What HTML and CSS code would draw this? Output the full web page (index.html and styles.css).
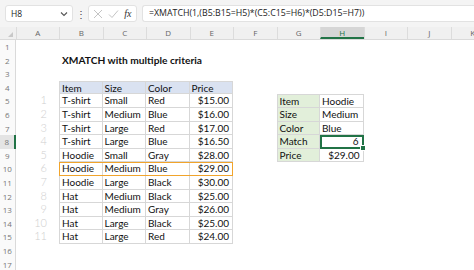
FILE: index.html
```html
<!DOCTYPE html>
<html lang="en">
<head>
    <meta charset="UTF-8">
    <title>XMATCH with multiple criteria</title>
    <link rel="stylesheet" href="styles.css">
</head>
<body>

    <div class="toolbar">
        <div class="namebox">
            <span>H8</span>
            <svg width="8" height="6" viewBox="0 0 8 6"><path d="M1 1.5 L4 4.5 L7 1.5" fill="none" stroke="#555" stroke-width="1.1"/></svg>
        </div>
        <div class="dots">&#8942;</div>
        <div class="fxbox">
            <svg width="10" height="10" viewBox="0 0 10 10"><path d="M1 1 L9 9 M9 1 L1 9" stroke="#c4c4c4" stroke-width="1"/></svg>
            <svg width="11" height="10" viewBox="0 0 11 10"><path d="M1 5.5 L4 8.5 L10 1.5" fill="none" stroke="#c4c4c4" stroke-width="1"/></svg>
            <span class="fx">fx</span>
        </div>
        <div class="formula">=XMATCH(1,(B5:B15=H5)*(C5:C15=H6)*(D5:D15=H7))</div>
    </div>

    <div class="sheet">
        <div class="colhead">
            <div class="corner"><span class="tri"></span></div>
            <div class="col">A</div>
            <div class="col">B</div>
            <div class="col">C</div>
            <div class="col">D</div>
            <div class="col">E</div>
            <div class="col">F</div>
            <div class="col">G</div>
            <div class="col active">H</div>
            <div class="col">I</div>
            <div class="col">J</div>
            <div class="col">K</div>
        </div>

        <div class="row"><div class="rh">1</div></div>
        <div class="row"><div class="rh">2</div><div class="c"></div><div class="title">XMATCH with multiple criteria</div></div>
        <div class="row"><div class="rh">3</div></div>
        <div class="row">
            <div class="rh">4</div><div class="c"></div>
            <div class="trow first head"><div class="c">Item</div><div class="c">Size</div><div class="c">Color</div><div class="c">Price</div></div>
        </div>
        <div class="row">
            <div class="rh">5</div><div class="c num">1</div>
            <div class="trow"><div class="c">T-shirt</div><div class="c">Small</div><div class="c">Red</div><div class="c r">$15.00</div></div>
            <div class="c"></div>
            <div class="lrow first"><div class="c lab">Item</div><div class="c">Hoodie</div></div>
        </div>
        <div class="row">
            <div class="rh">6</div><div class="c num">2</div>
            <div class="trow"><div class="c">T-shirt</div><div class="c">Medium</div><div class="c">Blue</div><div class="c r">$16.00</div></div>
            <div class="c"></div>
            <div class="lrow"><div class="c lab">Size</div><div class="c">Medium</div></div>
        </div>
        <div class="row">
            <div class="rh">7</div><div class="c num">3</div>
            <div class="trow"><div class="c">T-shirt</div><div class="c">Large</div><div class="c">Red</div><div class="c r">$17.00</div></div>
            <div class="c"></div>
            <div class="lrow"><div class="c lab">Color</div><div class="c">Blue</div></div>
        </div>
        <div class="row">
            <div class="rh sel">8</div><div class="c num">4</div>
            <div class="trow"><div class="c">T-shirt</div><div class="c">Large</div><div class="c">Blue</div><div class="c r">$16.50</div></div>
            <div class="c"></div>
            <div class="lrow"><div class="c lab">Match</div><div class="c r picked">6<span class="handle"></span></div></div>
        </div>
        <div class="row">
            <div class="rh">9</div><div class="c num">5</div>
            <div class="trow"><div class="c">Hoodie</div><div class="c">Small</div><div class="c">Gray</div><div class="c r">$28.00</div></div>
            <div class="c"></div>
            <div class="lrow"><div class="c lab">Price</div><div class="c r">$29.00</div></div>
        </div>
        <div class="row">
            <div class="rh">10</div><div class="c num">6</div>
            <div class="trow found"><div class="c">Hoodie</div><div class="c">Medium</div><div class="c">Blue</div><div class="c r">$29.00</div></div>
        </div>
        <div class="row">
            <div class="rh">11</div><div class="c num">7</div>
            <div class="trow"><div class="c">Hoodie</div><div class="c">Large</div><div class="c">Black</div><div class="c r">$30.00</div></div>
        </div>
        <div class="row">
            <div class="rh">12</div><div class="c num">8</div>
            <div class="trow"><div class="c">Hat</div><div class="c">Medium</div><div class="c">Black</div><div class="c r">$25.00</div></div>
        </div>
        <div class="row">
            <div class="rh">13</div><div class="c num">9</div>
            <div class="trow"><div class="c">Hat</div><div class="c">Medium</div><div class="c">Gray</div><div class="c r">$26.00</div></div>
        </div>
        <div class="row">
            <div class="rh">14</div><div class="c num">10</div>
            <div class="trow"><div class="c">Hat</div><div class="c">Large</div><div class="c">Black</div><div class="c r">$25.00</div></div>
        </div>
        <div class="row">
            <div class="rh">15</div><div class="c num">11</div>
            <div class="trow"><div class="c">Hat</div><div class="c">Large</div><div class="c">Red</div><div class="c r">$24.00</div></div>
        </div>
        <div class="row"><div class="rh">16</div></div>
        <div class="row"><div class="rh">17</div></div>
    </div>

</body>
</html>
```

FILE: styles.css
```css
body {
  margin: 0;
  width: 474px;
  height: 270px;
  overflow: hidden;
  background: #fff;
  font-family: "Open Sans", "Noto Sans", sans-serif;
}

/* formula bar */

.toolbar {
  display: flex;
  align-items: center;
  height: 27px;
  padding-left: 5px;
  background: #f4f4f4;
  box-sizing: border-box;
}

.namebox {
  width: 68px;
  height: 17px;
  box-sizing: border-box;
  background: #fff;
  border: 1px solid #e2e2e2;
  border-radius: 3px;
  display: flex;
  align-items: center;
  justify-content: space-between;
  padding: 0 4px 0 5px;
  font-size: 8.5px;
  color: #222;
}

.dots {
  width: 15px;
  text-align: center;
  font-size: 10px;
  color: #444;
}

.fxbox {
  width: 49px;
  height: 17px;
  box-sizing: border-box;
  background: #fff;
  border: 1px solid #e2e2e2;
  border-radius: 3px;
  display: flex;
  align-items: center;
  justify-content: space-around;
  padding: 0 2px;
}

.fx {
  font-family: "Liberation Serif", serif;
  font-style: italic;
  font-size: 10px;
  color: #333;
}

.formula {
  flex: 1;
  height: 17px;
  margin-left: 5px;
  box-sizing: border-box;
  background: #fff;
  border: 1px solid #e2e2e2;
  border-right: none;
  border-radius: 3px 0 0 3px;
  padding-left: 6px;
  font-size: 8.8px;
  line-height: 15px;
  color: #222;
  white-space: nowrap;
}

/* sheet */

.colhead {
  display: flex;
  height: 13px;
  background: #f0f0f0;
  border-bottom: 1px solid #dadada;
  box-sizing: border-box;
}

.corner {
  width: 15.5px;
  flex: none;
  position: relative;
}

.tri {
  position: absolute;
  right: 3px;
  bottom: 2px;
  border-left: 5px solid transparent;
  border-bottom: 5px solid #c8c8c8;
}

.col {
  width: 43.5px;
  flex: none;
  text-align: center;
  font-size: 8px;
  line-height: 12px;
  color: #666;
  border-left: 1px solid #dcdcdc;
  box-sizing: border-box;
}

.col.active {
  background: #d6d6d6;
  border-bottom: 2px solid #217346;
  color: #217346;
}

.row {
  display: flex;
  height: 13.6px;
}

.rh {
  width: 15.5px;
  flex: none;
  box-sizing: border-box;
  border-right: 1px solid #dadada;
  background: #fafafa;
  text-align: center;
  font-size: 8px;
  line-height: 13.6px;
  color: #777;
}

.rh.sel {
  background: #e4e4e4;
  border-right: 2px solid #217346;
}

.c {
  width: 43.5px;
  flex: none;
  box-sizing: border-box;
  padding: 0 2px;
  font-family: "Lato", "Open Sans", sans-serif;
  font-size: 10px;
  line-height: 12.6px;
  color: #111;
  white-space: nowrap;
}

.c.r {
  text-align: right;
  padding-right: 3px;
}

.c.num {
  text-align: right;
  padding-right: 12px;
  color: #cfcfcf;
  font-weight: 300;
  font-size: 11px;
}

.title {
  padding-left: 3px;
  font-family: "Lato", "Open Sans", sans-serif;
  font-weight: bold;
  font-size: 10.2px;
  line-height: 13.6px;
  color: #111;
  white-space: nowrap;
}

/* data tables */

.trow, .lrow {
  display: flex;
  border-left: 1px solid #d7d7d7;
}

.trow .c, .lrow .c {
  border-right: 1px solid #d7d7d7;
  border-bottom: 1px solid #d7d7d7;
  height: 13.6px;
}

.trow .c:first-child, .lrow .c:first-child {
  width: 42.5px;
}

.first .c {
  border-top: 1px solid #d7d7d7;
}

.head .c {
  background: #dae2f1;
}

.found {
  outline: 1px solid #f1a42b;
  outline-offset: -1px;
  position: relative;
}

.lab {
  background: #e2efda;
}

.picked {
  position: relative;
  border: 2px solid #217346 !important;
  line-height: 9.6px;
}

.handle {
  position: absolute;
  right: -4px;
  bottom: -4px;
  width: 4px;
  height: 4px;
  background: #217346;
  border: 1px solid #fff;
}
```
